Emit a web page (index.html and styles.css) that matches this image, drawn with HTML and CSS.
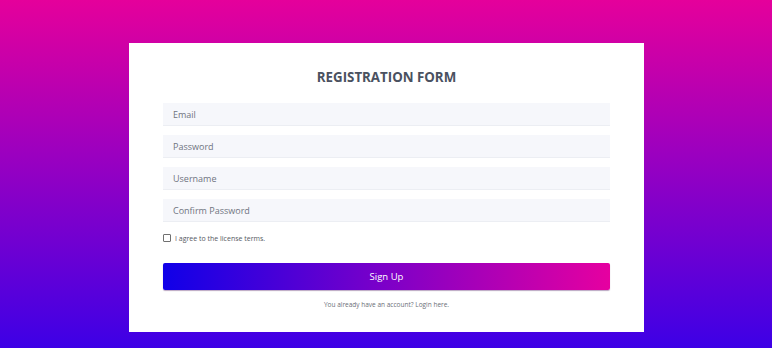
FILE: index.html
```html
<!DOCTYPE html>
<html>
<head>
<meta charset="utf-8">
<link rel="stylesheet" href="styles.css">
</head>
<body>
<div class="page">
  <form class="card">
    <h1 class="title">REGISTRATION FORM</h1>
    <div class="fields">
      <input class="field" type="text" placeholder="Email">
      <input class="field" type="password" placeholder="Password">
      <input class="field" type="text" placeholder="Username">
      <input class="field" type="password" placeholder="Confirm Password">
    </div>
    <label class="agree"><span class="box"></span><span>I agree to the license terms.</span></label>
    <button class="submit" type="button">Sign Up</button>
    <p class="foot">You already have an account? Login here.</p>
  </form>
</div>
</body>
</html>
```
FILE: styles.css
```css
html, body {
  margin: 0;
  padding: 0;
}
body {
  font-family: "Open Sans", "Noto Sans", sans-serif;
  width: 772px;
  height: 348px;
  overflow: hidden;
  background: linear-gradient(180deg, #e5009b 0%, #9a00c0 45%, #3d00e6 100%);
}
.page {
  padding: 43px 0 0 129px;
}
.card {
  box-sizing: border-box;
  width: 515px;
  height: 289px;
  background: #ffffff;
  padding: 24px 34px 0 34px;
  display: flex;
  flex-direction: column;
}
.title {
  margin: 0;
  text-align: center;
  font-size: 13.3px;
  line-height: 20px;
  font-weight: 700;
  color: #4a5160;
}
.fields {
  margin-top: 16px;
  display: flex;
  flex-direction: column;
  gap: 9px;
}
.field {
  box-sizing: border-box;
  height: 23px;
  width: 100%;
  border: none;
  border-bottom: 1px solid #eceef3;
  background: #f6f7fb;
  padding: 0 10px;
  font-family: "Open Sans", "Noto Sans", sans-serif;
  font-size: 9px;
  color: #555;
  outline: none;
}
.field::placeholder {
  color: #6f7480;
}
.agree {
  margin-top: 11px;
  display: flex;
  align-items: center;
  gap: 4px;
  height: 10px;
  font-size: 7px;
  color: #555a63;
}
.box {
  box-sizing: border-box;
  width: 8px;
  height: 8px;
  border: 1px solid #707070;
  border-radius: 1px;
  background: #fff;
}
.submit {
  margin-top: 20px;
  height: 27px;
  width: 100%;
  border: none;
  border-radius: 2px;
  background: linear-gradient(90deg, #1000e8 0%, #7d00c8 50%, #e600a0 100%);
  color: #ffffff;
  font-family: "Open Sans", "Noto Sans", sans-serif;
  font-size: 9.5px;
  box-shadow: 0 1px 1px rgba(60, 0, 80, 0.35);
}
.foot {
  margin: 10px 0 0 0;
  text-align: center;
  font-size: 6.5px;
  line-height: 10px;
  color: #6b6f78;
}
```
